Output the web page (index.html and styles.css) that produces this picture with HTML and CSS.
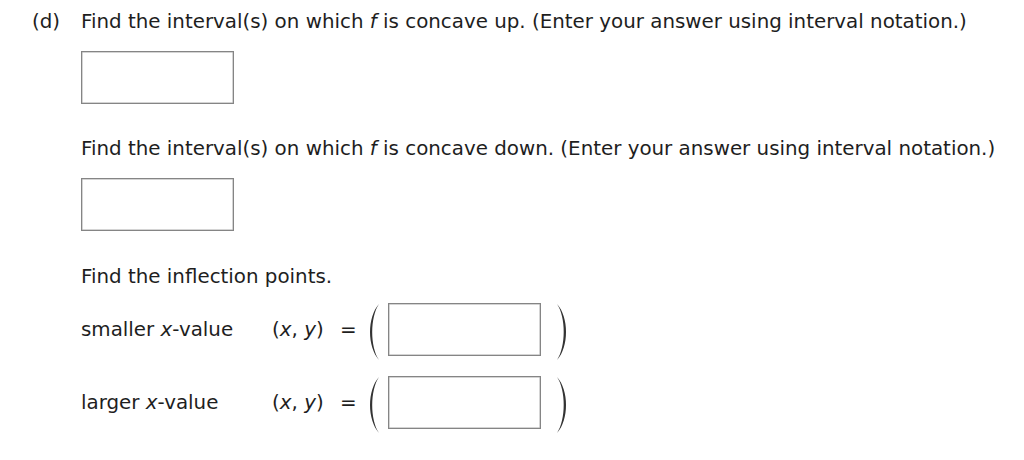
FILE: index.html
```html
<!DOCTYPE html>
<html>
<head>
<meta charset="utf-8">
<link rel="stylesheet" href="styles.css">
</head>
<body>
<div class="part">
  <div class="label">(d)</div>
  <div class="content">
    <p class="q">Find the interval(s) on which <i>f</i> is concave up. (Enter your answer using interval notation.)</p>
    <div class="box"></div>
    <p class="q q2">Find the interval(s) on which <i>f</i> is concave down. (Enter your answer using interval notation.)</p>
    <div class="box"></div>
    <p class="q q3">Find the inflection points.</p>
    <div class="points">
      <div class="row">
        <span class="name">smaller <i>x</i>-value</span>
        <span class="xy">(<i>x</i>, <i>y</i>)</span>
        <span class="eq">=</span>
        <svg class="paren" width="14" height="58" viewBox="0 0 14 58"><path d="M13 1 C1 14 1 44 13 57 C4 44 4 14 13 1 Z" fill="#333"/></svg>
        <div class="box pbox"></div>
        <svg class="paren rp" width="14" height="58" viewBox="0 0 14 58"><path d="M1 1 C13 14 13 44 1 57 C10 44 10 14 1 1 Z" fill="#333"/></svg>
      </div>
      <div class="row">
        <span class="name">larger <i>x</i>-value</span>
        <span class="xy">(<i>x</i>, <i>y</i>)</span>
        <span class="eq">=</span>
        <svg class="paren" width="14" height="58" viewBox="0 0 14 58"><path d="M13 1 C1 14 1 44 13 57 C4 44 4 14 13 1 Z" fill="#333"/></svg>
        <div class="box pbox"></div>
        <svg class="paren rp" width="14" height="58" viewBox="0 0 14 58"><path d="M1 1 C13 14 13 44 1 57 C10 44 10 14 1 1 Z" fill="#333"/></svg>
      </div>
    </div>
  </div>
</div>
</body>
</html>
```
FILE: styles.css
```css
html, body {
  margin: 0;
  padding: 0;
  background: #fff;
}
body {
  font-family: "DejaVu Sans", Verdana, sans-serif;
  font-size: 19.85px;
  color: #1e1e1e;
}
.part {
  display: flex;
  padding: 10px 0 0 32px;
}
.label {
  width: 49px;
  line-height: 24px;
}
.content {
  display: flex;
  flex-direction: column;
  align-items: flex-start;
}
.q {
  margin: 0;
  line-height: 24px;
  white-space: nowrap;
}
.q2 {
  margin-top: 33px;
}
.q3 {
  margin-top: 34px;
}
.box {
  box-sizing: border-box;
  margin-top: 17px;
  width: 153px;
  height: 53px;
  border: 1px solid #858585;
  box-shadow: inset 0 0 0 0.5px #aaa;
  background: #fff;
}
.points {
  display: flex;
  flex-direction: column;
  gap: 15px;
  margin-top: 14px;
}
.row {
  display: flex;
  align-items: flex-start;
}
.name,
.xy,
.eq {
  margin-top: 0;
  line-height: 53px;
}
.name {
  width: 191px;
}
.xy {
  width: 68px;
}
.eq {
  width: 26px;
}
.paren {
  display: block;
}
.pbox {
  margin: 0 0 0 8px;
}
.rp {
  margin-left: 15px;
}
```
